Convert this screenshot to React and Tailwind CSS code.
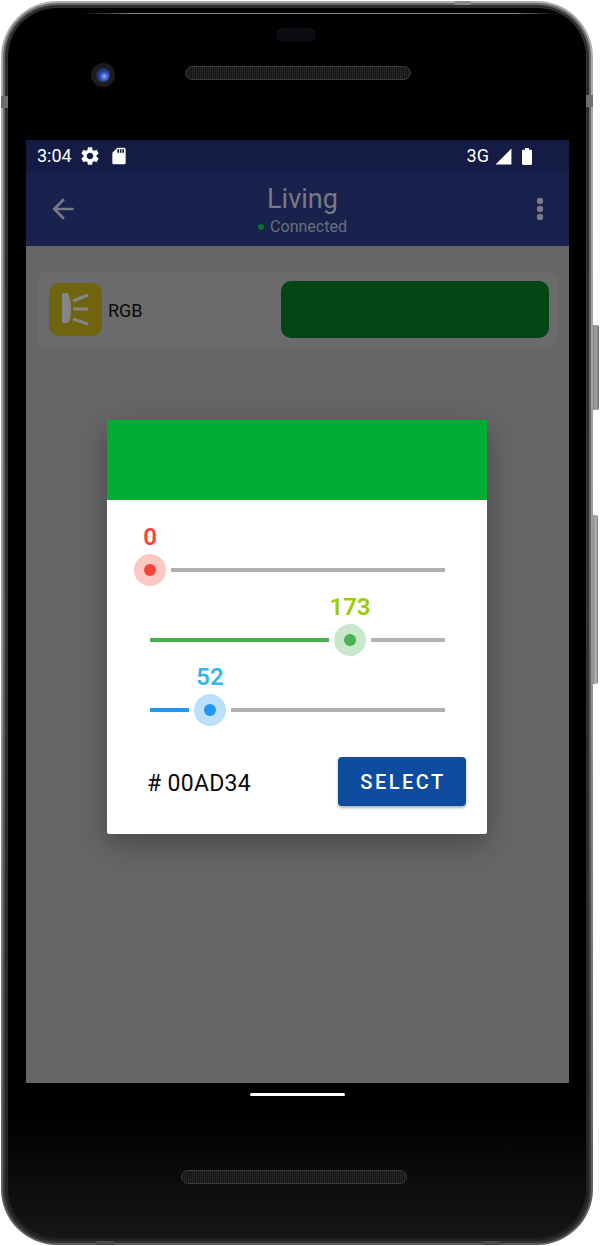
import React from "react";

const Icon = ({ d, className }) => (
  <svg viewBox="0 0 24 24" className={className} fill="currentColor">
    <path d={d} />
  </svg>
);

const GEAR = "M19.14 12.94c.04-.3.06-.61.06-.94 0-.32-.02-.64-.07-.94l2.03-1.58c.18-.14.23-.41.12-.61l-1.92-3.32c-.12-.22-.37-.29-.59-.22l-2.39.96c-.5-.38-1.03-.7-1.62-.94l-.36-2.54c-.04-.24-.24-.41-.48-.41h-3.84c-.24 0-.43.17-.47.41l-.36 2.54c-.59.24-1.13.57-1.62.94l-2.39-.96c-.22-.08-.47 0-.59.22L2.74 8.87c-.12.21-.08.47.12.61l2.03 1.58c-.05.3-.09.63-.09.94s.02.64.07.94l-2.03 1.58c-.18.14-.23.41-.12.61l1.92 3.32c.12.22.37.29.59.22l2.39-.96c.5.38 1.03.7 1.62.94l.36 2.54c.05.24.24.41.48.41h3.84c.24 0 .44-.17.47-.41l.36-2.54c.59-.24 1.13-.56 1.62-.94l2.39.96c.22.08.47 0 .59-.22l1.92-3.32c.12-.22.07-.47-.12-.61l-2.01-1.58zM12 15.6c-1.98 0-3.6-1.62-3.6-3.6s1.62-3.6 3.6-3.6 3.6 1.62 3.6 3.6-1.62 3.6-3.6 3.6z";
const SD = "M18 2h-8L4.02 8 4 20c0 1.1.9 2 2 2h12c1.1 0 2-.9 2-2V4c0-1.1-.9-2-2-2zm-6 6h-2V4h2v4zm3 0h-2V4h2v4zm3 0h-2V4h2v4z";
const SIGNAL = "M2 22h20V2z";
const BACK = "M20 11H7.83l5.59-5.59L12 4l-8 8 8 8 1.41-1.41L7.83 13H20v-2z";

const Speaker = ({ className }) => (
  <div
    className={`h-[14px] rounded-full border border-[#3a3a3a] bg-[repeating-linear-gradient(90deg,#262626_0px,#262626_1px,#151515_1px,#151515_2px)] ${className}`}
  />
);

const Slider = ({ value, labelColor, fill, dot, halo, fillWidth, leftShift, trackWidth }) => (
  <div className={`flex h-[70px] items-center gap-[5px] ${leftShift}`}>
    {fillWidth && <div className={`h-[4px] ${fillWidth} ${fill}`} />}
    <div className={`relative flex h-[32px] w-[32px] items-center justify-center rounded-full ${halo}`}>
      <div className={`h-[12px] w-[12px] rounded-full ${dot}`} />
      <span className={`absolute bottom-[35px] left-1/2 -translate-x-1/2 text-[24px] leading-[28px] font-semibold ${labelColor}`}>
        {value}
      </span>
    </div>
    <div className={`h-[4px] bg-[#b2b2b2] ${trackWidth}`} />
  </div>
);

export default function App() {
  return (
    <div className="relative h-[1246px] w-[600px] overflow-hidden bg-white font-[Roboto,sans-serif]">
      {/* side buttons */}
      <div className="absolute left-[592px] top-[325px] h-[85px] w-[7px] rounded-r-[2px] bg-[linear-gradient(90deg,#7a7a7a,#a5a5a5_60%,#6a6a6a)]" />
      <div className="absolute left-[592px] top-[515px] h-[169px] w-[6px] rounded-r-[2px] bg-[linear-gradient(90deg,#7a7a7a,#b8b8b8_70%,#6a6a6a)]" />

      {/* phone body */}
      <div className="relative ml-[1px] mt-[1px] h-[1244px] w-[592px] rounded-[56px] bg-[linear-gradient(180deg,#b0b0b0_0%,#9a9a9a_50%,#5a5a5a_100%)] p-[2px]">
        <div className="h-full w-full rounded-[54px] bg-[linear-gradient(180deg,#6a6a6a_0%,#626262_50%,#333333_100%)] p-[2px]">
          <div className="h-full w-full rounded-[52px] bg-[linear-gradient(180deg,#2e2e2e_0%,#333333_50%,#222222_100%)] p-[3px]">
            <div className="flex h-full w-full flex-col rounded-[49px] bg-[linear-gradient(180deg,#000_90%,#161616_100%)] px-[18px]">
              {/* top bezel */}
              <div className="relative h-[132px] shrink-0">
                <div className="absolute left-[54px] top-[5px] h-[1px] w-[480px] bg-[linear-gradient(90deg,transparent,#8a8a8a_12%,#8a8a8a_90%,transparent)]" />
                <div className="absolute left-[65px] top-[55px] flex h-[24px] w-[24px] items-center justify-center rounded-full bg-[#1c1c20]">
                  <div className="h-[14px] w-[14px] rounded-full bg-[radial-gradient(circle_at_60%_60%,#8ea8ff_0%,#2c44a0_40%,#0c1230_100%)]" />
                </div>
                <div className="absolute left-[250px] top-[20px] h-[14px] w-[40px] rounded-full bg-[#0b0d12]" />
                <Speaker className="absolute left-[159px] top-[58px] w-[226px]" />
              </div>

              {/* screen */}
              <div className="relative flex h-[943px] w-[543px] shrink-0 flex-col bg-[#666666]">
                <div className="flex h-[32px] items-center bg-[#141b44] pl-[11px] pr-[37px] text-white">
                  <span className="text-[18px] leading-none">3:04</span>
                  <Icon d={GEAR} className="ml-[7px] h-[22px] w-[22px]" />
                  <Icon d={SD} className="ml-[8px] h-[20px] w-[20px]" />
                  <span className="ml-auto text-[18px] leading-none">3G</span>
                  <Icon d={SIGNAL} className="ml-[5px] h-[19px] w-[19px]" />
                  <svg viewBox="7 2 10 20" preserveAspectRatio="none" className="ml-[9px] h-[17px] w-[10px]" fill="currentColor">
                    <path d="M15.67 4H14V2h-4v2H8.33C7.6 4 7 4.6 7 5.33v15.33C7 21.4 7.6 22 8.33 22h7.33c.74 0 1.34-.6 1.34-1.33V5.33C17 4.6 16.4 4 15.67 4z" />
                  </svg>
                </div>

                <div className="flex h-[74px] items-center justify-between bg-[#19214d] pl-[21px] pr-[25px]">
                  <Icon d={BACK} className="h-[32px] w-[32px] text-[#777985]" />
                  <div className="mr-[10px] flex flex-col items-center pt-[2px]">
                    <span className="text-[27px] leading-[32px] text-[#777985]">Living</span>
                    <div className="mt-[2px] flex items-center gap-[6px]">
                      <span className="h-[6px] w-[6px] rounded-full bg-[#04722a]" />
                      <span className="text-[16px] leading-[20px] text-[#6c6e7a]">Connected</span>
                    </div>
                  </div>
                  <svg viewBox="0 0 8 24" className="h-[24px] w-[8px] text-[#777985]" fill="currentColor">
                    <circle cx="4" cy="4" r="3.2" />
                    <circle cx="4" cy="12" r="3.2" />
                    <circle cx="4" cy="20" r="3.2" />
                  </svg>
                </div>

                <div className="mx-[11px] mt-[26px] flex h-[75px] items-center justify-between rounded-[10px] bg-[#6b6b6b] pl-[12px] pr-[9px]">
                  <div className="flex items-center gap-[6px]">
                    <div className="flex h-[53px] w-[53px] items-center justify-center rounded-[10px] bg-[#6f6410]">
                      <svg viewBox="0 0 53 53" className="h-[53px] w-[53px]">
                        <path d="M13 10h6c2 5 3 10 3 16s-1 11-3 14h-6z" fill="#858585" />
                        <path d="M24 18l15-6M24 26h15M24 36l15 5" stroke="#858585" strokeWidth="3" fill="none" />
                      </svg>
                    </div>
                    <span className="pt-[2px] text-[18px] leading-none text-[#0a0a0a]">RGB</span>
                  </div>
                  <div className="h-[57px] w-[268px] rounded-[10px] bg-[#024516]" />
                </div>

                {/* dialog */}
                <div className="absolute left-[81px] top-[280px] w-[380px] rounded-[2px] bg-white shadow-[0_10px_30px_rgba(0,0,0,0.3)]">
                  <div className="h-[80px] bg-[#00ad34]" />
                  <div className="pl-[43px] pt-[35px]">
                    <Slider value="0" labelColor="text-[#ff4040]" dot="bg-[#f44336]" halo="bg-[#fdc7c3]" leftShift="-ml-[16px]" trackWidth="w-[274px]" />
                    <Slider value="173" labelColor="text-[#9ccc00]" fill="bg-[#4caf50]" dot="bg-[#4caf50]" halo="bg-[#c9e7ca]" fillWidth="w-[179px]" trackWidth="w-[74px]" />
                    <Slider value="52" labelColor="text-[#35b6e9]" fill="bg-[#2196f3]" dot="bg-[#2196f3]" halo="bg-[#bcdffb]" fillWidth="w-[39px]" trackWidth="w-[214px]" />
                  </div>
                  <div className="mt-[12px] flex items-center justify-between pb-[28px] pl-[40px] pr-[21px]">
                    <span className="pt-[3px] text-[23px] leading-none tracking-[0.3px] text-[#0a0a0a]">
                      # 00AD34
                    </span>
                    <button className="flex h-[49px] w-[128px] items-center justify-center rounded-[4px] bg-[#0d4c9f] pl-[2px] pt-[1px] text-[20px] font-medium tracking-[2.5px] text-white shadow-[0_2px_3px_rgba(0,0,0,0.3)]">
                      SELECT
                    </button>
                  </div>
                </div>
              </div>

              {/* bottom bezel */}
              <div className="flex flex-1 flex-col items-center">
                <div className="mt-[10px] h-[3px] w-[95px] rounded-full bg-white" />
                <Speaker className="mt-[74px] w-[226px] -translate-x-[3px]" />
              </div>
            </div>
          </div>
        </div>
      </div>

      {/* antenna bands on the frame */}
      <div className="absolute left-[455px] top-[1px] h-[4px] w-[16px] bg-[#8a8a8a]" />
      <div className="absolute left-[1px] top-[96px] h-[12px] w-[7px] bg-[#6e6e6e]" />
      <div className="absolute left-[586px] top-[95px] h-[12px] w-[7px] bg-[#6e6e6e]" />
      <div className="absolute left-[97px] top-[1241px] h-[4px] w-[17px] bg-[#4a4a4a]" />
      <div className="absolute left-[483px] top-[1241px] h-[4px] w-[17px] bg-[#4a4a4a]" />
    </div>
  );
}
